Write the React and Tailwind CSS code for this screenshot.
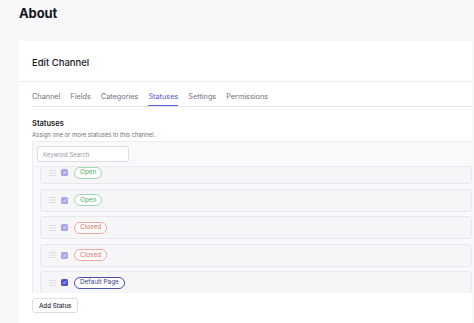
const font = { fontFamily: 'Inter, "Noto Sans", sans-serif' };

const tabs = ['Channel', 'Fields', 'Categories', 'Statuses', 'Settings', 'Permissions'];

const statuses = [
  { name: 'Open', tone: 'green', checked: false },
  { name: 'Open', tone: 'green', checked: false },
  { name: 'Closed', tone: 'red', checked: false },
  { name: 'Closed', tone: 'red', checked: false },
  { name: 'Default Page', tone: 'indigo', checked: true },
];

const pillClass = {
  green: 'border-[#9fd8b0] text-[#4fae6d]',
  red: 'border-[#efa69e] text-[#dc6e63]',
  indigo: 'border-[#4b4fa6] text-[#393e8c]',
};

function DragHandle() {
  return (
    <svg width="7" height="6" viewBox="0 0 7 6" className="shrink-0">
      <path d="M0 0.5h7M0 3h7M0 5.5h7" stroke="#d6d6dd" strokeWidth="0.8" />
    </svg>
  );
}

function Checkbox({ checked }) {
  return (
    <span
      className={
        'flex h-[7px] w-[7px] shrink-0 items-center justify-center rounded-[1.5px] ' +
        (checked ? 'bg-[#4f53dc]' : 'bg-[#a6a8ea]')
      }
    >
      <svg width="5" height="5" viewBox="0 0 5 5">
        <path d="M1 2.6l1 1 2-2.2" fill="none" stroke="white" strokeWidth="0.8" />
      </svg>
    </span>
  );
}

function StatusRow({ status }) {
  return (
    <div className="flex h-[23px] shrink-0 items-center rounded-[3px] border border-[#e8e8ee] bg-[#f6f6f9] pl-[8px]">
      <DragHandle />
      <div className="ml-[5px]">
        <Checkbox checked={status.checked} />
      </div>
      <span
        className={
          'ml-[6px] flex h-[12px] items-center rounded-full border bg-white px-[5px] text-[6.4px] leading-none ' +
          pillClass[status.tone]
        }
      >
        {status.name}
      </span>
    </div>
  );
}

export default function App() {
  return (
    <div style={font} className="h-[323px] w-[474px] overflow-hidden bg-[#f8f8fa] text-[#1b1b23]">
      <h1 className="pl-[19px] pt-[5px] text-[13px] font-bold leading-[16px] tracking-[-0.1px] text-[#17171f]">
        About
      </h1>

      <div className="ml-[19px] mt-[20px] w-[453px] bg-white pb-[20px]">
        <div className="flex h-[41px] items-center border-b border-[#ededf1] pl-[13px] pt-[4px]">
          <h2 className="text-[9.5px] font-medium text-[#18181f]">Edit Channel</h2>
        </div>

        <div className="pl-[13px]">
          <nav className="flex h-[25px] gap-[10px] border-b border-[#e4e4ea] pt-[7px]">
            {tabs.map((tab) => (
              <span
                key={tab}
                className={
                  'flex items-center border-b-[1.5px] text-[7.3px] leading-none ' +
                  (tab === 'Statuses'
                    ? 'border-[#5b5fd6] text-[#5357cf]'
                    : 'border-transparent text-[#6f7080]')
                }
              >
                {tab}
              </span>
            ))}
          </nav>

          <div className="pt-[12px]">
            <h3 className="text-[7.5px] font-semibold leading-[9px] text-[#1b1b23]">Statuses</h3>
            <p className="mt-[3px] text-[5.9px] leading-[7px] text-[#70707e]">
              Assign one or more statuses to this channel.
            </p>

            <div className="mt-[3px] border-l border-t border-[#ebebf0] bg-[#f9f9fb]">
              <div className="border-b border-[#ebebf0] pb-[4px] pl-[4px] pt-[4px]">
                <div className="flex h-[16px] w-[92px] items-center rounded-[3px] border border-[#dcdce2] bg-white pl-[5px] text-[6px] text-[#9a9aa8]">
                  Keyword Search
                </div>
              </div>
              <div className="h-[126px] overflow-hidden pl-[7px]">
                <div className="-mt-[6px] flex flex-col gap-[4.5px]">
                  {statuses.map((s, i) => (
                    <StatusRow key={i} status={s} />
                  ))}
                </div>
              </div>
            </div>

            <button className="mt-[5px] flex h-[15px] items-center rounded-[3px] border border-[#dcdce2] bg-white px-[6px] text-[6.2px] font-medium text-[#2a2a33]">
              Add Status
            </button>
          </div>
        </div>
      </div>
    </div>
  );
}
